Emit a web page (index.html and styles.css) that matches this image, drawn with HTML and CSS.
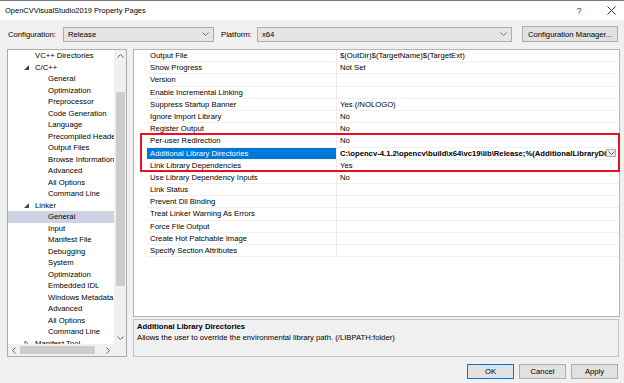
FILE: index.html
```html
<!DOCTYPE html>
<html>
<head>
<meta charset="utf-8">
<link rel="stylesheet" href="styles.css">
</head>
<body>
<div class="window">
  <div class="titlebar">
    <span class="title">OpenCVVisualStudio2019 Property Pages</span>
    <span class="tb-btn">?</span>
    <span class="tb-btn close"><svg width="9" height="9" viewBox="0 0 9 9"><path d="M0.5 0.5 L8.5 8.5 M8.5 0.5 L0.5 8.5" stroke="#333" stroke-width="1" fill="none"/></svg></span>
  </div>

  <div class="config-row">
    <span class="lbl cfg-lbl">Configuration:</span>
    <div class="combo cfg-combo"><span class="combo-text">Release</span><svg class="chev" width="7" height="4" viewBox="0 0 7 4"><polyline points="0.5,0.5 3.5,3.5 6.5,0.5" fill="none" stroke="#707070" stroke-width="1"/></svg></div>
    <span class="lbl plat-lbl">Platform:</span>
    <div class="combo plat-combo"><span class="combo-text">x64</span><svg class="chev" width="7" height="4" viewBox="0 0 7 4"><polyline points="0.5,0.5 3.5,3.5 6.5,0.5" fill="none" stroke="#707070" stroke-width="1"/></svg></div>
    <div class="btn cfg-mgr">Configuration Manager...</div>
  </div>

  <div class="main">
    <div class="tree">
      <div class="tree-list">
        <div class="node d1">VC++ Directories</div>
        <div class="node d1 exp"><svg class="tri" width="5" height="5" viewBox="0 0 5 5"><polygon points="5,0 5,5 0,5" fill="#444"/></svg>C/C++</div>
        <div class="node d2">General</div>
        <div class="node d2">Optimization</div>
        <div class="node d2">Preprocessor</div>
        <div class="node d2">Code Generation</div>
        <div class="node d2">Language</div>
        <div class="node d2">Precompiled Headers</div>
        <div class="node d2">Output Files</div>
        <div class="node d2">Browse Information</div>
        <div class="node d2">Advanced</div>
        <div class="node d2">All Options</div>
        <div class="node d2">Command Line</div>
        <div class="node d1 exp"><svg class="tri" width="5" height="5" viewBox="0 0 5 5"><polygon points="5,0 5,5 0,5" fill="#444"/></svg>Linker</div>
        <div class="node d2 sel">General</div>
        <div class="node d2">Input</div>
        <div class="node d2">Manifest File</div>
        <div class="node d2">Debugging</div>
        <div class="node d2">System</div>
        <div class="node d2">Optimization</div>
        <div class="node d2">Embedded IDL</div>
        <div class="node d2">Windows Metadata</div>
        <div class="node d2">Advanced</div>
        <div class="node d2">All Options</div>
        <div class="node d2">Command Line</div>
        <div class="node d1 exp"><svg class="tri" width="5" height="5" viewBox="0 0 5 5"><polygon points="1,0 4,2.5 1,5" fill="none" stroke="#444" stroke-width="0.8"/></svg>Manifest Tool</div>
      </div>
      <div class="vscroll">
        <div class="sarrow"><svg width="7" height="4" viewBox="0 0 7 4"><polyline points="0.5,3.5 3.5,0.5 6.5,3.5" fill="none" stroke="#606060" stroke-width="1"/></svg></div>
        <div class="vtrack"><div class="vthumb"></div></div>
        <div class="sarrow"><svg width="7" height="4" viewBox="0 0 7 4"><polyline points="0.5,0.5 3.5,3.5 6.5,0.5" fill="none" stroke="#606060" stroke-width="1"/></svg></div>
      </div>
      <div class="hscroll">
        <div class="sarrow h"><svg width="4" height="7" viewBox="0 0 4 7"><polyline points="3.5,0.5 0.5,3.5 3.5,6.5" fill="none" stroke="#606060" stroke-width="1"/></svg></div>
        <div class="htrack"><div class="hthumb"></div></div>
        <div class="sarrow h"><svg width="4" height="7" viewBox="0 0 4 7"><polyline points="0.5,0.5 3.5,3.5 0.5,6.5" fill="none" stroke="#606060" stroke-width="1"/></svg></div>
      </div>
      <div class="corner"></div>
    </div>

    <div class="right">
      <div class="grid">
        <div class="row"><span class="gut"></span><span class="name">Output File</span><span class="val">$(OutDir)$(TargetName)$(TargetExt)</span></div>
        <div class="row"><span class="gut"></span><span class="name">Show Progress</span><span class="val">Not Set</span></div>
        <div class="row"><span class="gut"></span><span class="name">Version</span><span class="val"></span></div>
        <div class="row"><span class="gut"></span><span class="name">Enable Incremental Linking</span><span class="val"></span></div>
        <div class="row"><span class="gut"></span><span class="name">Suppress Startup Banner</span><span class="val">Yes (/NOLOGO)</span></div>
        <div class="row"><span class="gut"></span><span class="name">Ignore Import Library</span><span class="val">No</span></div>
        <div class="row"><span class="gut"></span><span class="name">Register Output</span><span class="val">No</span></div>
        <div class="row"><span class="gut"></span><span class="name">Per-user Redirection</span><span class="val">No</span></div>
        <div class="row selrow"><span class="gut"></span><span class="name">Additional Library Directories</span><span class="val bold"><span class="val-text">C:\opencv-4.1.2\opencv\build\x64\vc19\lib\Release;%(AdditionalLibraryDirectories)</span><span class="dd"><svg width="7" height="4" viewBox="0 0 7 4"><polyline points="0.5,0.5 3.5,3.5 6.5,0.5" fill="none" stroke="#606060" stroke-width="1"/></svg></span></span></div>
        <div class="row"><span class="gut"></span><span class="name">Link Library Dependencies</span><span class="val">Yes</span></div>
        <div class="row"><span class="gut"></span><span class="name">Use Library Dependency Inputs</span><span class="val">No</span></div>
        <div class="row"><span class="gut"></span><span class="name">Link Status</span><span class="val"></span></div>
        <div class="row"><span class="gut"></span><span class="name">Prevent Dll Binding</span><span class="val"></span></div>
        <div class="row"><span class="gut"></span><span class="name">Treat Linker Warning As Errors</span><span class="val"></span></div>
        <div class="row"><span class="gut"></span><span class="name">Force File Output</span><span class="val"></span></div>
        <div class="row"><span class="gut"></span><span class="name">Create Hot Patchable Image</span><span class="val"></span></div>
        <div class="row"><span class="gut"></span><span class="name">Specify Section Attributes</span><span class="val"></span></div>
      </div>
      <div class="desc">
        <div class="desc-title">Additional Library Directories</div>
        <div class="desc-text">Allows the user to override the environmental library path. (/LIBPATH:folder)</div>
      </div>
    </div>
  </div>

  <div class="buttons">
    <div class="btn dlg default">OK</div>
    <div class="btn dlg">Cancel</div>
    <div class="btn dlg">Apply</div>
  </div>

  <div class="highlight"></div>
</div>
</body>
</html>
```

FILE: styles.css
```css
* { box-sizing: border-box; }

html, body {
  margin: 0;
  padding: 0;
}

body {
  width: 624px;
  height: 383px;
  overflow: hidden;
  background: #f0f0f0;
  font-family: "Liberation Sans", Arial, sans-serif;
  font-size: 7.7px;
  color: #000;
}

.window {
  position: relative;
  height: 383px;
  display: flex;
  flex-direction: column;
}

/* title bar */
.titlebar {
  height: 20px;
  border-top: 1px solid #7a7a7a;
  background: #fff;
  display: flex;
  align-items: center;
  padding-left: 5px;
  padding-right: 5px;
  gap: 16px;
}
.title {
  flex: 1;
  font-size: 7.5px;
}
.tb-btn {
  width: 16px;
  text-align: center;
  font-size: 8.5px;
  color: #333;
  display: flex;
  justify-content: center;
  align-items: center;
}

/* configuration row */
.config-row {
  height: 28px;
  display: flex;
  align-items: center;
  padding-left: 8px;
}
.lbl { white-space: nowrap; }
.cfg-lbl { width: 55px; }
.plat-lbl { width: 36px; margin-left: 7px; }
.combo {
  height: 15px;
  border: 1px solid #adadad;
  background: #e5e5e5;
  display: flex;
  align-items: center;
  padding-left: 4px;
  padding-right: 4px;
}
.combo-text { flex: 1; }
.cfg-combo { width: 151px; }
.plat-combo { width: 255px; }
.chev { display: block; }
.btn {
  height: 16px;
  border: 1px solid #adadad;
  background: #e1e1e1;
  display: flex;
  align-items: center;
  justify-content: center;
  white-space: nowrap;
}
.cfg-mgr {
  width: 96px;
  margin-left: 10px;
}

/* main area */
.main {
  height: 308px;
  margin-top: 1px;
  padding-left: 7px;
  padding-right: 4px;
  display: flex;
  gap: 6px;
}

.tree {
  width: 120px;
  border: 1px solid #acacac;
  background: #fff;
  display: grid;
  grid-template-columns: 1fr 12px;
  grid-template-rows: 1fr 12px;
}
.tree-list {
  overflow: hidden;
}
.node {
  height: 11.5px;
  line-height: 11.5px;
  white-space: nowrap;
  overflow: hidden;
}
.node.d1 { padding-left: 27px; }
.node.d1.exp {
  padding-left: 16px;
  display: flex;
  align-items: center;
}
.tri {
  display: block;
  margin-right: 6px;
  flex: none;
}
.node.d2 { padding-left: 40px; }
.node.sel { background: #cdd3e2; }

.vscroll {
  background: #f0f0f0;
  display: flex;
  flex-direction: column;
}
.sarrow {
  height: 12px;
  display: flex;
  align-items: center;
  justify-content: center;
  flex: none;
}
.sarrow.h {
  height: auto;
  width: 12px;
}
.vtrack {
  flex: 1;
  padding-top: 30px;
  display: flex;
  justify-content: center;
}
.vthumb {
  width: 9px;
  height: 194px;
  background: #cdcdcd;
}
.hscroll {
  background: #f0f0f0;
  display: flex;
}
.htrack {
  flex: 1;
  display: flex;
  align-items: center;
}
.hthumb {
  width: 75px;
  height: 8px;
  background: #cdcdcd;
}
.corner { background: #f0f0f0; }

.right {
  width: 487px;
  display: flex;
  flex-direction: column;
  gap: 2px;
}
.grid {
  height: 268px;
  border: 1px solid #b4b4b4;
  background: #fff;
}
.row {
  height: 12.2px;
  display: grid;
  grid-template-columns: 13px 190px 1fr;
}
.row span { white-space: nowrap; overflow: hidden; }
.name, .val {
  border-bottom: 1px solid #f0f0f0;
  line-height: 11.2px;
  padding-left: 3px;
}
.name { border-right: 1px solid #ececec; }
.selrow .name {
  background: #0078d7;
  color: #fff;
}
.val.bold {
  font-weight: bold;
  display: flex;
  align-items: center;
  padding-right: 3px;
}
.val-text {
  flex: 1;
  overflow: hidden;
}
.dd {
  width: 10px;
  height: 8px;
  flex: none;
  border: 1px solid #b0b0b0;
  background: #ececec;
  display: flex;
  align-items: center;
  justify-content: center;
}

.desc {
  height: 38px;
  margin-right: 1px;
  border: 1px solid #c4c4c4;
  background: #f0f0f0;
  padding: 1px 3px;
  line-height: 11px;
}
.desc-title { font-weight: bold; }

.buttons {
  display: flex;
  justify-content: flex-end;
  gap: 5px;
  padding-top: 7px;
  padding-right: 6px;
}
.btn.dlg {
  width: 47px;
  height: 15px;
}
.btn.default { border-color: #0078d7; }

.highlight {
  position: absolute;
  left: 140px;
  top: 133px;
  width: 480px;
  height: 39px;
  border: 2px solid #e81123;
}
```
